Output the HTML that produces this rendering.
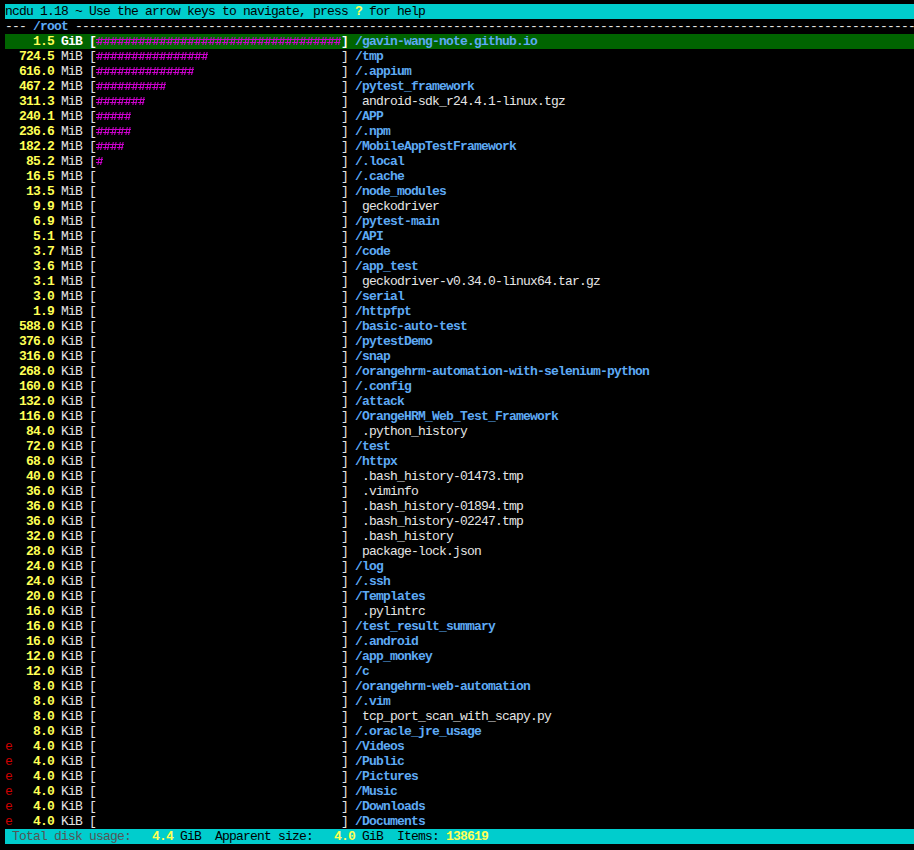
<!DOCTYPE html>
<html><head><meta charset="utf-8"><style>
html,body{margin:0;padding:0;background:#000;width:914px;height:850px;overflow:hidden;position:relative}
.s{position:absolute;font-family:"Liberation Mono",monospace;font-size:13.0px;line-height:15px;height:15px;letter-spacing:-0.8012px;white-space:pre;margin-top:0px}
.b{font-weight:bold}
.hs{position:absolute}
.bar{position:absolute;left:5px;right:0;height:15px}
</style></head><body>
<svg width="0" height="0" style="position:absolute"><defs><pattern id="hp" width="7" height="15" patternUnits="userSpaceOnUse"><path d="M0 5.5H7M0 8.5H6.2M3.3 3L1.9 11M6.1 3L4.6 11" stroke="#cd00cd" stroke-width="1" fill="none"/></pattern></defs></svg>
<div class="bar" style="top:4px;background:#00cdcd"></div>
<span class="s " style="top:4px;left:5px;color:#000000;">ncdu&nbsp;1.18&nbsp;~&nbsp;Use&nbsp;the&nbsp;arrow&nbsp;keys&nbsp;to&nbsp;navigate,&nbsp;press&nbsp;</span>
<span class="s b" style="top:4px;left:355px;color:#ffff55;">?</span>
<span class="s " style="top:4px;left:369px;color:#000000;">for&nbsp;help</span>
<span class="s " style="top:19px;left:5px;color:#e5e5e5;">---</span>
<span class="s b" style="top:19px;left:33px;color:#5eaaf5;">/root</span>
<span class="s " style="top:19px;left:75px;color:#e5e5e5;">------------------------------------------------------------------------------------------------------------------------</span>
<div class="bar" style="top:34px;background:#006400"></div>
<span class="s b" style="top:34px;left:33px;color:#ffff55;">1.5</span>
<span class="s b" style="top:34px;left:61px;color:#ffffff;">GiB</span>
<span class="s b" style="top:34px;left:89px;color:#ffffff;">[</span>
<svg class="hs" style="top:34px;left:96px" width="245" height="15"><rect width="245" height="15" fill="url(#hp)"/></svg>
<span class="s b" style="top:34px;left:341px;color:#ffffff;">]</span>
<span class="s b" style="top:34px;left:355px;color:#5eaaf5;">/gavin-wang-note.github.io</span>
<span class="s b" style="top:49px;left:19px;color:#ffff55;">724.5</span>
<span class="s " style="top:49px;left:61px;color:#e5e5e5;">MiB</span>
<span class="s " style="top:49px;left:89px;color:#e5e5e5;">[</span>
<svg class="hs" style="top:49px;left:96px" width="112" height="15"><rect width="112" height="15" fill="url(#hp)"/></svg>
<span class="s " style="top:49px;left:341px;color:#e5e5e5;">]</span>
<span class="s b" style="top:49px;left:355px;color:#5eaaf5;">/tmp</span>
<span class="s b" style="top:64px;left:19px;color:#ffff55;">616.0</span>
<span class="s " style="top:64px;left:61px;color:#e5e5e5;">MiB</span>
<span class="s " style="top:64px;left:89px;color:#e5e5e5;">[</span>
<svg class="hs" style="top:64px;left:96px" width="98" height="15"><rect width="98" height="15" fill="url(#hp)"/></svg>
<span class="s " style="top:64px;left:341px;color:#e5e5e5;">]</span>
<span class="s b" style="top:64px;left:355px;color:#5eaaf5;">/.appium</span>
<span class="s b" style="top:79px;left:19px;color:#ffff55;">467.2</span>
<span class="s " style="top:79px;left:61px;color:#e5e5e5;">MiB</span>
<span class="s " style="top:79px;left:89px;color:#e5e5e5;">[</span>
<svg class="hs" style="top:79px;left:96px" width="70" height="15"><rect width="70" height="15" fill="url(#hp)"/></svg>
<span class="s " style="top:79px;left:341px;color:#e5e5e5;">]</span>
<span class="s b" style="top:79px;left:355px;color:#5eaaf5;">/pytest_framework</span>
<span class="s b" style="top:94px;left:19px;color:#ffff55;">311.3</span>
<span class="s " style="top:94px;left:61px;color:#e5e5e5;">MiB</span>
<span class="s " style="top:94px;left:89px;color:#e5e5e5;">[</span>
<svg class="hs" style="top:94px;left:96px" width="49" height="15"><rect width="49" height="15" fill="url(#hp)"/></svg>
<span class="s " style="top:94px;left:341px;color:#e5e5e5;">]</span>
<span class="s " style="top:94px;left:362px;color:#e5e5e5;">android-sdk_r24.4.1-linux.tgz</span>
<span class="s b" style="top:109px;left:19px;color:#ffff55;">240.1</span>
<span class="s " style="top:109px;left:61px;color:#e5e5e5;">MiB</span>
<span class="s " style="top:109px;left:89px;color:#e5e5e5;">[</span>
<svg class="hs" style="top:109px;left:96px" width="35" height="15"><rect width="35" height="15" fill="url(#hp)"/></svg>
<span class="s " style="top:109px;left:341px;color:#e5e5e5;">]</span>
<span class="s b" style="top:109px;left:355px;color:#5eaaf5;">/APP</span>
<span class="s b" style="top:124px;left:19px;color:#ffff55;">236.6</span>
<span class="s " style="top:124px;left:61px;color:#e5e5e5;">MiB</span>
<span class="s " style="top:124px;left:89px;color:#e5e5e5;">[</span>
<svg class="hs" style="top:124px;left:96px" width="35" height="15"><rect width="35" height="15" fill="url(#hp)"/></svg>
<span class="s " style="top:124px;left:341px;color:#e5e5e5;">]</span>
<span class="s b" style="top:124px;left:355px;color:#5eaaf5;">/.npm</span>
<span class="s b" style="top:139px;left:19px;color:#ffff55;">182.2</span>
<span class="s " style="top:139px;left:61px;color:#e5e5e5;">MiB</span>
<span class="s " style="top:139px;left:89px;color:#e5e5e5;">[</span>
<svg class="hs" style="top:139px;left:96px" width="28" height="15"><rect width="28" height="15" fill="url(#hp)"/></svg>
<span class="s " style="top:139px;left:341px;color:#e5e5e5;">]</span>
<span class="s b" style="top:139px;left:355px;color:#5eaaf5;">/MobileAppTestFramework</span>
<span class="s b" style="top:154px;left:26px;color:#ffff55;">85.2</span>
<span class="s " style="top:154px;left:61px;color:#e5e5e5;">MiB</span>
<span class="s " style="top:154px;left:89px;color:#e5e5e5;">[</span>
<svg class="hs" style="top:154px;left:96px" width="7" height="15"><rect width="7" height="15" fill="url(#hp)"/></svg>
<span class="s " style="top:154px;left:341px;color:#e5e5e5;">]</span>
<span class="s b" style="top:154px;left:355px;color:#5eaaf5;">/.local</span>
<span class="s b" style="top:169px;left:26px;color:#ffff55;">16.5</span>
<span class="s " style="top:169px;left:61px;color:#e5e5e5;">MiB</span>
<span class="s " style="top:169px;left:89px;color:#e5e5e5;">[</span>
<span class="s " style="top:169px;left:341px;color:#e5e5e5;">]</span>
<span class="s b" style="top:169px;left:355px;color:#5eaaf5;">/.cache</span>
<span class="s b" style="top:184px;left:26px;color:#ffff55;">13.5</span>
<span class="s " style="top:184px;left:61px;color:#e5e5e5;">MiB</span>
<span class="s " style="top:184px;left:89px;color:#e5e5e5;">[</span>
<span class="s " style="top:184px;left:341px;color:#e5e5e5;">]</span>
<span class="s b" style="top:184px;left:355px;color:#5eaaf5;">/node_modules</span>
<span class="s b" style="top:199px;left:33px;color:#ffff55;">9.9</span>
<span class="s " style="top:199px;left:61px;color:#e5e5e5;">MiB</span>
<span class="s " style="top:199px;left:89px;color:#e5e5e5;">[</span>
<span class="s " style="top:199px;left:341px;color:#e5e5e5;">]</span>
<span class="s " style="top:199px;left:362px;color:#e5e5e5;">geckodriver</span>
<span class="s b" style="top:214px;left:33px;color:#ffff55;">6.9</span>
<span class="s " style="top:214px;left:61px;color:#e5e5e5;">MiB</span>
<span class="s " style="top:214px;left:89px;color:#e5e5e5;">[</span>
<span class="s " style="top:214px;left:341px;color:#e5e5e5;">]</span>
<span class="s b" style="top:214px;left:355px;color:#5eaaf5;">/pytest-main</span>
<span class="s b" style="top:229px;left:33px;color:#ffff55;">5.1</span>
<span class="s " style="top:229px;left:61px;color:#e5e5e5;">MiB</span>
<span class="s " style="top:229px;left:89px;color:#e5e5e5;">[</span>
<span class="s " style="top:229px;left:341px;color:#e5e5e5;">]</span>
<span class="s b" style="top:229px;left:355px;color:#5eaaf5;">/API</span>
<span class="s b" style="top:244px;left:33px;color:#ffff55;">3.7</span>
<span class="s " style="top:244px;left:61px;color:#e5e5e5;">MiB</span>
<span class="s " style="top:244px;left:89px;color:#e5e5e5;">[</span>
<span class="s " style="top:244px;left:341px;color:#e5e5e5;">]</span>
<span class="s b" style="top:244px;left:355px;color:#5eaaf5;">/code</span>
<span class="s b" style="top:259px;left:33px;color:#ffff55;">3.6</span>
<span class="s " style="top:259px;left:61px;color:#e5e5e5;">MiB</span>
<span class="s " style="top:259px;left:89px;color:#e5e5e5;">[</span>
<span class="s " style="top:259px;left:341px;color:#e5e5e5;">]</span>
<span class="s b" style="top:259px;left:355px;color:#5eaaf5;">/app_test</span>
<span class="s b" style="top:274px;left:33px;color:#ffff55;">3.1</span>
<span class="s " style="top:274px;left:61px;color:#e5e5e5;">MiB</span>
<span class="s " style="top:274px;left:89px;color:#e5e5e5;">[</span>
<span class="s " style="top:274px;left:341px;color:#e5e5e5;">]</span>
<span class="s " style="top:274px;left:362px;color:#e5e5e5;">geckodriver-v0.34.0-linux64.tar.gz</span>
<span class="s b" style="top:289px;left:33px;color:#ffff55;">3.0</span>
<span class="s " style="top:289px;left:61px;color:#e5e5e5;">MiB</span>
<span class="s " style="top:289px;left:89px;color:#e5e5e5;">[</span>
<span class="s " style="top:289px;left:341px;color:#e5e5e5;">]</span>
<span class="s b" style="top:289px;left:355px;color:#5eaaf5;">/serial</span>
<span class="s b" style="top:304px;left:33px;color:#ffff55;">1.9</span>
<span class="s " style="top:304px;left:61px;color:#e5e5e5;">MiB</span>
<span class="s " style="top:304px;left:89px;color:#e5e5e5;">[</span>
<span class="s " style="top:304px;left:341px;color:#e5e5e5;">]</span>
<span class="s b" style="top:304px;left:355px;color:#5eaaf5;">/httpfpt</span>
<span class="s b" style="top:319px;left:19px;color:#ffff55;">588.0</span>
<span class="s " style="top:319px;left:61px;color:#e5e5e5;">KiB</span>
<span class="s " style="top:319px;left:89px;color:#e5e5e5;">[</span>
<span class="s " style="top:319px;left:341px;color:#e5e5e5;">]</span>
<span class="s b" style="top:319px;left:355px;color:#5eaaf5;">/basic-auto-test</span>
<span class="s b" style="top:334px;left:19px;color:#ffff55;">376.0</span>
<span class="s " style="top:334px;left:61px;color:#e5e5e5;">KiB</span>
<span class="s " style="top:334px;left:89px;color:#e5e5e5;">[</span>
<span class="s " style="top:334px;left:341px;color:#e5e5e5;">]</span>
<span class="s b" style="top:334px;left:355px;color:#5eaaf5;">/pytestDemo</span>
<span class="s b" style="top:349px;left:19px;color:#ffff55;">316.0</span>
<span class="s " style="top:349px;left:61px;color:#e5e5e5;">KiB</span>
<span class="s " style="top:349px;left:89px;color:#e5e5e5;">[</span>
<span class="s " style="top:349px;left:341px;color:#e5e5e5;">]</span>
<span class="s b" style="top:349px;left:355px;color:#5eaaf5;">/snap</span>
<span class="s b" style="top:364px;left:19px;color:#ffff55;">268.0</span>
<span class="s " style="top:364px;left:61px;color:#e5e5e5;">KiB</span>
<span class="s " style="top:364px;left:89px;color:#e5e5e5;">[</span>
<span class="s " style="top:364px;left:341px;color:#e5e5e5;">]</span>
<span class="s b" style="top:364px;left:355px;color:#5eaaf5;">/orangehrm-automation-with-selenium-python</span>
<span class="s b" style="top:379px;left:19px;color:#ffff55;">160.0</span>
<span class="s " style="top:379px;left:61px;color:#e5e5e5;">KiB</span>
<span class="s " style="top:379px;left:89px;color:#e5e5e5;">[</span>
<span class="s " style="top:379px;left:341px;color:#e5e5e5;">]</span>
<span class="s b" style="top:379px;left:355px;color:#5eaaf5;">/.config</span>
<span class="s b" style="top:394px;left:19px;color:#ffff55;">132.0</span>
<span class="s " style="top:394px;left:61px;color:#e5e5e5;">KiB</span>
<span class="s " style="top:394px;left:89px;color:#e5e5e5;">[</span>
<span class="s " style="top:394px;left:341px;color:#e5e5e5;">]</span>
<span class="s b" style="top:394px;left:355px;color:#5eaaf5;">/attack</span>
<span class="s b" style="top:409px;left:19px;color:#ffff55;">116.0</span>
<span class="s " style="top:409px;left:61px;color:#e5e5e5;">KiB</span>
<span class="s " style="top:409px;left:89px;color:#e5e5e5;">[</span>
<span class="s " style="top:409px;left:341px;color:#e5e5e5;">]</span>
<span class="s b" style="top:409px;left:355px;color:#5eaaf5;">/OrangeHRM_Web_Test_Framework</span>
<span class="s b" style="top:424px;left:26px;color:#ffff55;">84.0</span>
<span class="s " style="top:424px;left:61px;color:#e5e5e5;">KiB</span>
<span class="s " style="top:424px;left:89px;color:#e5e5e5;">[</span>
<span class="s " style="top:424px;left:341px;color:#e5e5e5;">]</span>
<span class="s " style="top:424px;left:362px;color:#e5e5e5;">.python_history</span>
<span class="s b" style="top:439px;left:26px;color:#ffff55;">72.0</span>
<span class="s " style="top:439px;left:61px;color:#e5e5e5;">KiB</span>
<span class="s " style="top:439px;left:89px;color:#e5e5e5;">[</span>
<span class="s " style="top:439px;left:341px;color:#e5e5e5;">]</span>
<span class="s b" style="top:439px;left:355px;color:#5eaaf5;">/test</span>
<span class="s b" style="top:454px;left:26px;color:#ffff55;">68.0</span>
<span class="s " style="top:454px;left:61px;color:#e5e5e5;">KiB</span>
<span class="s " style="top:454px;left:89px;color:#e5e5e5;">[</span>
<span class="s " style="top:454px;left:341px;color:#e5e5e5;">]</span>
<span class="s b" style="top:454px;left:355px;color:#5eaaf5;">/httpx</span>
<span class="s b" style="top:469px;left:26px;color:#ffff55;">40.0</span>
<span class="s " style="top:469px;left:61px;color:#e5e5e5;">KiB</span>
<span class="s " style="top:469px;left:89px;color:#e5e5e5;">[</span>
<span class="s " style="top:469px;left:341px;color:#e5e5e5;">]</span>
<span class="s " style="top:469px;left:362px;color:#e5e5e5;">.bash_history-01473.tmp</span>
<span class="s b" style="top:484px;left:26px;color:#ffff55;">36.0</span>
<span class="s " style="top:484px;left:61px;color:#e5e5e5;">KiB</span>
<span class="s " style="top:484px;left:89px;color:#e5e5e5;">[</span>
<span class="s " style="top:484px;left:341px;color:#e5e5e5;">]</span>
<span class="s " style="top:484px;left:362px;color:#e5e5e5;">.viminfo</span>
<span class="s b" style="top:499px;left:26px;color:#ffff55;">36.0</span>
<span class="s " style="top:499px;left:61px;color:#e5e5e5;">KiB</span>
<span class="s " style="top:499px;left:89px;color:#e5e5e5;">[</span>
<span class="s " style="top:499px;left:341px;color:#e5e5e5;">]</span>
<span class="s " style="top:499px;left:362px;color:#e5e5e5;">.bash_history-01894.tmp</span>
<span class="s b" style="top:514px;left:26px;color:#ffff55;">36.0</span>
<span class="s " style="top:514px;left:61px;color:#e5e5e5;">KiB</span>
<span class="s " style="top:514px;left:89px;color:#e5e5e5;">[</span>
<span class="s " style="top:514px;left:341px;color:#e5e5e5;">]</span>
<span class="s " style="top:514px;left:362px;color:#e5e5e5;">.bash_history-02247.tmp</span>
<span class="s b" style="top:529px;left:26px;color:#ffff55;">32.0</span>
<span class="s " style="top:529px;left:61px;color:#e5e5e5;">KiB</span>
<span class="s " style="top:529px;left:89px;color:#e5e5e5;">[</span>
<span class="s " style="top:529px;left:341px;color:#e5e5e5;">]</span>
<span class="s " style="top:529px;left:362px;color:#e5e5e5;">.bash_history</span>
<span class="s b" style="top:544px;left:26px;color:#ffff55;">28.0</span>
<span class="s " style="top:544px;left:61px;color:#e5e5e5;">KiB</span>
<span class="s " style="top:544px;left:89px;color:#e5e5e5;">[</span>
<span class="s " style="top:544px;left:341px;color:#e5e5e5;">]</span>
<span class="s " style="top:544px;left:362px;color:#e5e5e5;">package-lock.json</span>
<span class="s b" style="top:559px;left:26px;color:#ffff55;">24.0</span>
<span class="s " style="top:559px;left:61px;color:#e5e5e5;">KiB</span>
<span class="s " style="top:559px;left:89px;color:#e5e5e5;">[</span>
<span class="s " style="top:559px;left:341px;color:#e5e5e5;">]</span>
<span class="s b" style="top:559px;left:355px;color:#5eaaf5;">/log</span>
<span class="s b" style="top:574px;left:26px;color:#ffff55;">24.0</span>
<span class="s " style="top:574px;left:61px;color:#e5e5e5;">KiB</span>
<span class="s " style="top:574px;left:89px;color:#e5e5e5;">[</span>
<span class="s " style="top:574px;left:341px;color:#e5e5e5;">]</span>
<span class="s b" style="top:574px;left:355px;color:#5eaaf5;">/.ssh</span>
<span class="s b" style="top:589px;left:26px;color:#ffff55;">20.0</span>
<span class="s " style="top:589px;left:61px;color:#e5e5e5;">KiB</span>
<span class="s " style="top:589px;left:89px;color:#e5e5e5;">[</span>
<span class="s " style="top:589px;left:341px;color:#e5e5e5;">]</span>
<span class="s b" style="top:589px;left:355px;color:#5eaaf5;">/Templates</span>
<span class="s b" style="top:604px;left:26px;color:#ffff55;">16.0</span>
<span class="s " style="top:604px;left:61px;color:#e5e5e5;">KiB</span>
<span class="s " style="top:604px;left:89px;color:#e5e5e5;">[</span>
<span class="s " style="top:604px;left:341px;color:#e5e5e5;">]</span>
<span class="s " style="top:604px;left:362px;color:#e5e5e5;">.pylintrc</span>
<span class="s b" style="top:619px;left:26px;color:#ffff55;">16.0</span>
<span class="s " style="top:619px;left:61px;color:#e5e5e5;">KiB</span>
<span class="s " style="top:619px;left:89px;color:#e5e5e5;">[</span>
<span class="s " style="top:619px;left:341px;color:#e5e5e5;">]</span>
<span class="s b" style="top:619px;left:355px;color:#5eaaf5;">/test_result_summary</span>
<span class="s b" style="top:634px;left:26px;color:#ffff55;">16.0</span>
<span class="s " style="top:634px;left:61px;color:#e5e5e5;">KiB</span>
<span class="s " style="top:634px;left:89px;color:#e5e5e5;">[</span>
<span class="s " style="top:634px;left:341px;color:#e5e5e5;">]</span>
<span class="s b" style="top:634px;left:355px;color:#5eaaf5;">/.android</span>
<span class="s b" style="top:649px;left:26px;color:#ffff55;">12.0</span>
<span class="s " style="top:649px;left:61px;color:#e5e5e5;">KiB</span>
<span class="s " style="top:649px;left:89px;color:#e5e5e5;">[</span>
<span class="s " style="top:649px;left:341px;color:#e5e5e5;">]</span>
<span class="s b" style="top:649px;left:355px;color:#5eaaf5;">/app_monkey</span>
<span class="s b" style="top:664px;left:26px;color:#ffff55;">12.0</span>
<span class="s " style="top:664px;left:61px;color:#e5e5e5;">KiB</span>
<span class="s " style="top:664px;left:89px;color:#e5e5e5;">[</span>
<span class="s " style="top:664px;left:341px;color:#e5e5e5;">]</span>
<span class="s b" style="top:664px;left:355px;color:#5eaaf5;">/c</span>
<span class="s b" style="top:679px;left:33px;color:#ffff55;">8.0</span>
<span class="s " style="top:679px;left:61px;color:#e5e5e5;">KiB</span>
<span class="s " style="top:679px;left:89px;color:#e5e5e5;">[</span>
<span class="s " style="top:679px;left:341px;color:#e5e5e5;">]</span>
<span class="s b" style="top:679px;left:355px;color:#5eaaf5;">/orangehrm-web-automation</span>
<span class="s b" style="top:694px;left:33px;color:#ffff55;">8.0</span>
<span class="s " style="top:694px;left:61px;color:#e5e5e5;">KiB</span>
<span class="s " style="top:694px;left:89px;color:#e5e5e5;">[</span>
<span class="s " style="top:694px;left:341px;color:#e5e5e5;">]</span>
<span class="s b" style="top:694px;left:355px;color:#5eaaf5;">/.vim</span>
<span class="s b" style="top:709px;left:33px;color:#ffff55;">8.0</span>
<span class="s " style="top:709px;left:61px;color:#e5e5e5;">KiB</span>
<span class="s " style="top:709px;left:89px;color:#e5e5e5;">[</span>
<span class="s " style="top:709px;left:341px;color:#e5e5e5;">]</span>
<span class="s " style="top:709px;left:362px;color:#e5e5e5;">tcp_port_scan_with_scapy.py</span>
<span class="s b" style="top:724px;left:33px;color:#ffff55;">8.0</span>
<span class="s " style="top:724px;left:61px;color:#e5e5e5;">KiB</span>
<span class="s " style="top:724px;left:89px;color:#e5e5e5;">[</span>
<span class="s " style="top:724px;left:341px;color:#e5e5e5;">]</span>
<span class="s b" style="top:724px;left:355px;color:#5eaaf5;">/.oracle_jre_usage</span>
<span class="s " style="top:739px;left:5px;color:#cd0000;">e</span>
<span class="s b" style="top:739px;left:33px;color:#ffff55;">4.0</span>
<span class="s " style="top:739px;left:61px;color:#e5e5e5;">KiB</span>
<span class="s " style="top:739px;left:89px;color:#e5e5e5;">[</span>
<span class="s " style="top:739px;left:341px;color:#e5e5e5;">]</span>
<span class="s b" style="top:739px;left:355px;color:#5eaaf5;">/Videos</span>
<span class="s " style="top:754px;left:5px;color:#cd0000;">e</span>
<span class="s b" style="top:754px;left:33px;color:#ffff55;">4.0</span>
<span class="s " style="top:754px;left:61px;color:#e5e5e5;">KiB</span>
<span class="s " style="top:754px;left:89px;color:#e5e5e5;">[</span>
<span class="s " style="top:754px;left:341px;color:#e5e5e5;">]</span>
<span class="s b" style="top:754px;left:355px;color:#5eaaf5;">/Public</span>
<span class="s " style="top:769px;left:5px;color:#cd0000;">e</span>
<span class="s b" style="top:769px;left:33px;color:#ffff55;">4.0</span>
<span class="s " style="top:769px;left:61px;color:#e5e5e5;">KiB</span>
<span class="s " style="top:769px;left:89px;color:#e5e5e5;">[</span>
<span class="s " style="top:769px;left:341px;color:#e5e5e5;">]</span>
<span class="s b" style="top:769px;left:355px;color:#5eaaf5;">/Pictures</span>
<span class="s " style="top:784px;left:5px;color:#cd0000;">e</span>
<span class="s b" style="top:784px;left:33px;color:#ffff55;">4.0</span>
<span class="s " style="top:784px;left:61px;color:#e5e5e5;">KiB</span>
<span class="s " style="top:784px;left:89px;color:#e5e5e5;">[</span>
<span class="s " style="top:784px;left:341px;color:#e5e5e5;">]</span>
<span class="s b" style="top:784px;left:355px;color:#5eaaf5;">/Music</span>
<span class="s " style="top:799px;left:5px;color:#cd0000;">e</span>
<span class="s b" style="top:799px;left:33px;color:#ffff55;">4.0</span>
<span class="s " style="top:799px;left:61px;color:#e5e5e5;">KiB</span>
<span class="s " style="top:799px;left:89px;color:#e5e5e5;">[</span>
<span class="s " style="top:799px;left:341px;color:#e5e5e5;">]</span>
<span class="s b" style="top:799px;left:355px;color:#5eaaf5;">/Downloads</span>
<span class="s " style="top:814px;left:5px;color:#cd0000;">e</span>
<span class="s b" style="top:814px;left:33px;color:#ffff55;">4.0</span>
<span class="s " style="top:814px;left:61px;color:#e5e5e5;">KiB</span>
<span class="s " style="top:814px;left:89px;color:#e5e5e5;">[</span>
<span class="s " style="top:814px;left:341px;color:#e5e5e5;">]</span>
<span class="s b" style="top:814px;left:355px;color:#5eaaf5;">/Documents</span>
<div class="bar" style="top:829px;background:#00cdcd"></div>
<span class="s " style="top:829px;left:12px;color:#555555;">Total&nbsp;disk&nbsp;usage:</span>
<span class="s b" style="top:829px;left:152px;color:#ffff55;">4.4</span>
<span class="s " style="top:829px;left:180px;color:#000000;">GiB</span>
<span class="s " style="top:829px;left:215px;color:#000000;">Apparent&nbsp;size:</span>
<span class="s b" style="top:829px;left:334px;color:#ffff55;">4.0</span>
<span class="s " style="top:829px;left:362px;color:#000000;">GiB</span>
<span class="s " style="top:829px;left:397px;color:#000000;">Items:</span>
<span class="s b" style="top:829px;left:446px;color:#ffff55;">138619</span>
</body></html>
